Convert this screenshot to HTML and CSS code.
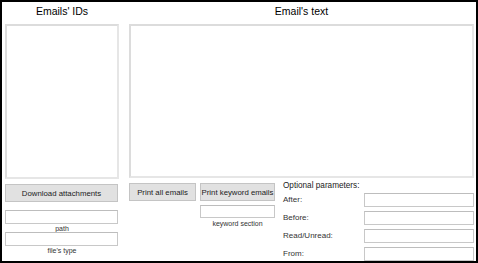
FILE: index.html
```html
<!DOCTYPE html>
<html lang="en">

<head>
    <meta charset="UTF-8">
    <meta name="viewport" content="width=device-width, initial-scale=1.0">
    <title>Mail reader</title>
    <link rel="stylesheet" href="styles.css">
</head>

<body>
    <div class="frame">
        <div class="left">
            <div class="title">Emails' IDs</div>
            <div class="box"></div>
            <button class="btn wide">Download attachments</button>
            <input class="field first" type="text">
            <span class="hint">path</span>
            <input class="field" type="text">
            <span class="hint">file's type</span>
        </div>
        <div class="right">
            <div class="title">Email's text</div>
            <div class="box"></div>
            <div class="bottom">
                <button class="btn all">Print all emails</button>
                <div class="kw">
                    <button class="btn keyword">Print keyword emails</button>
                    <input class="field" type="text">
                    <span class="hint">keyword section</span>
                </div>
                <div class="params">
                    <div class="params-title">Optional parameters:</div>
                    <div class="row"><span>After:</span><input class="field" type="text"></div>
                    <div class="row"><span>Before:</span><input class="field" type="text"></div>
                    <div class="row"><span>Read/Unread:</span><input class="field" type="text"></div>
                    <div class="row"><span>From:</span><input class="field" type="text"></div>
                </div>
            </div>
        </div>
    </div>
</body>
</html>
```

FILE: styles.css
```css
body {
    margin: 0;
    font-family: "Liberation Sans", sans-serif;
    color: #222;
}

.frame {
    width: 478px;
    height: 263px;
    box-sizing: border-box;
    border: 2px solid #000;
    padding: 0 2px 0 3px;
    display: flex;
    gap: 10px;
    background: #fff;
}

.left {
    width: 114px;
    display: flex;
    flex-direction: column;
}

.right {
    flex: 1;
    display: flex;
    flex-direction: column;
}

.title {
    height: 22px;
    line-height: 19px;
    text-align: center;
    font-size: 10.5px;
    color: #000;
}

.box {
    height: 155px;
    box-sizing: border-box;
    border: 2px solid #dcdcdc;
    border-right-color: #e6e6e6;
    border-bottom-color: #e6e6e6;
    background: #fff;
}

.btn {
    height: 18px;
    margin-top: 5px;
    padding: 0;
    box-sizing: border-box;
    border: 1px solid #c4c4c4;
    background: #e1e1e1;
    font-family: inherit;
    font-size: 7.8px;
    color: #222;
    white-space: nowrap;
}

.btn.wide {
    width: 113px;
}

.field {
    display: block;
    appearance: none;
    margin: 0;
    padding: 0;
    height: 14px;
    box-sizing: border-box;
    border: 1px solid #c8c8c8;
    border-top-color: #bdbdbd;
    background: #fff;
}

.left .field {
    width: 113px;
}

.left .field.first {
    margin-top: 8px;
}

.hint {
    display: block;
    height: 8px;
    line-height: 9px;
    font-size: 7px;
    text-align: center;
    color: #333;
}

.bottom {
    display: flex;
}

.btn.all {
    width: 67px;
}

.kw {
    width: 75px;
    margin-left: 4px;
    display: flex;
    flex-direction: column;
}

.btn.keyword {
    width: 75px;
}

.kw .field {
    width: 75px;
    height: 13px;
    margin-top: 4px;
}

.kw .hint {
    margin-top: 1px;
}

.params {
    flex: 1;
    margin-left: 8px;
    display: flex;
    flex-direction: column;
    gap: 4px;
}

.params-title {
    height: 11px;
    margin-top: 3px;
    line-height: 10px;
    font-size: 8.2px;
    margin-bottom: -3px;
}

.row {
    display: flex;
    align-items: center;
    justify-content: space-between;
    font-size: 8px;
    color: #333;
}

.row span {
    margin-top: -2px;
}

.row .field {
    width: 110px;
}
```
